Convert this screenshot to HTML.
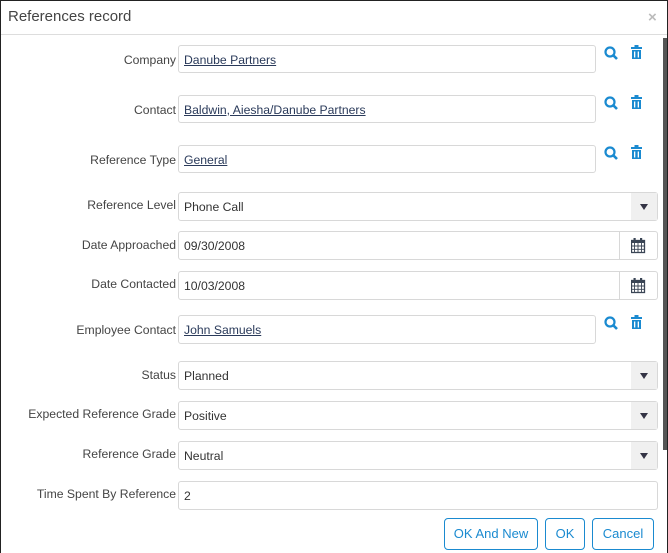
<!DOCTYPE html><html><head><style>
body{margin:0;width:668px;height:550px;overflow:hidden;background:#fff;font-family:"Liberation Sans",sans-serif;font-size:12.2px;color:#333;}
.frame{position:absolute;left:0;top:0;width:666px;height:552px;border:1px solid #222;border-bottom:none;}
.title{position:absolute;left:8px;top:8px;font-size:15px;color:#444;}
.x{position:absolute;left:648px;top:9px;color:#bbb;font-size:15px;font-weight:bold}
.hr{position:absolute;left:1px;right:1px;top:34px;border-top:1px solid #ddd;}
.sb{position:absolute;left:663px;top:38px;width:4px;height:412px;background:#555;}
.lab{position:absolute;right:492px;text-align:right;white-space:nowrap;color:#444}
.in{position:absolute;left:178px;height:27px;border:1px solid #d8d8d8;border-radius:3px;box-sizing:border-box;background:#fff}
.in span{position:absolute;left:5px;top:7px;color:#333}
.in span.u{color:#2a3a5a;text-decoration:underline}
.dd{position:absolute;right:0;top:0;width:26px;height:100%;background:#f0f0f0;}
.dd:after{content:"";position:absolute;left:9px;top:11px;border-left:4px solid transparent;border-right:4px solid transparent;border-top:6px solid #334;}
.cal{position:absolute;right:0;top:0;width:37px;height:100%;border-left:1px solid #d8d8d8}
.btn{position:absolute;top:518px;height:32px;border:1px solid #1a8ad0;border-radius:4px;box-sizing:border-box;color:#1a8ad0;text-align:center;line-height:29px;font-size:13px}
</style></head><body>
<div class="frame"></div>
<div class="title">References record</div><div class="x">×</div>
<div class="hr"></div><div class="sb"></div>
<svg width="0" height="0" style="position:absolute"><defs>
<g id="s"><circle cx="6" cy="6" r="4.5" fill="none" stroke="#1a8ad0" stroke-width="2.2"/><line x1="9.3" y1="9.3" x2="13" y2="13" stroke="#1a8ad0" stroke-width="2.6"/></g>
<g id="t" fill="#1a8ad0"><rect x="0" y="2" width="11" height="2"/><rect x="3.5" y="0" width="4" height="2"/><path d="M1 5h9v9h-9z M3 6.5v6h1.3v-6z M6.7 6.5v6h1.3v-6z" fill-rule="evenodd"/></g>
<g id="c" fill="#3a4555"><rect x="0.5" y="2.5" width="13" height="12" fill="none" stroke="#3a4555" stroke-width="1.3"/><rect x="0" y="2" width="14" height="3"/><rect x="2.5" y="0" width="2.2" height="3"/><rect x="9" y="0" width="2.2" height="3"/><path d="M0 8h14M0 11.3h14M3.5 5v9M7 5v9M10.5 5v9" stroke="#3a4555" stroke-width=".9"/></g>
</defs></svg>

<div class="lab" style="top:53px">Company</div><div class="in" style="top:45px;width:418px;height:28px"><span class="u">Danube Partners</span></div>
<svg style="position:absolute;left:604px;top:46px" width="14" height="14"><use href="#s"/></svg><svg style="position:absolute;left:631px;top:45px" width="12" height="15"><use href="#t"/></svg>

<div class="lab" style="top:103px">Contact</div><div class="in" style="top:95px;width:418px;height:28px"><span class="u">Baldwin, Aiesha/Danube Partners</span></div>
<svg style="position:absolute;left:604px;top:96px" width="14" height="14"><use href="#s"/></svg><svg style="position:absolute;left:631px;top:95px" width="12" height="15"><use href="#t"/></svg>

<div class="lab" style="top:153px">Reference Type</div><div class="in" style="top:145px;width:418px;height:28px"><span class="u">General</span></div>
<svg style="position:absolute;left:604px;top:146px" width="14" height="14"><use href="#s"/></svg><svg style="position:absolute;left:631px;top:145px" width="12" height="15"><use href="#t"/></svg>

<div class="lab" style="top:198px">Reference Level</div><div class="in" style="top:192px;width:480px;height:29px"><span>Phone Call</span><div class="dd"></div></div>
<div class="lab" style="top:238px">Date Approached</div><div class="in" style="top:231px;width:480px;height:29px"><span>09/30/2008</span><div class="cal"><svg style="position:absolute;left:11px;top:6px" width="15" height="16"><use href="#c"/></svg></div></div>
<div class="lab" style="top:277px">Date Contacted</div><div class="in" style="top:271px;width:480px;height:29px"><span>10/03/2008</span><div class="cal"><svg style="position:absolute;left:11px;top:6px" width="15" height="16"><use href="#c"/></svg></div></div>

<div class="lab" style="top:323px">Employee Contact</div><div class="in" style="top:315px;width:418px;height:29px"><span class="u">John Samuels</span></div>
<svg style="position:absolute;left:604px;top:316px" width="14" height="14"><use href="#s"/></svg><svg style="position:absolute;left:631px;top:315px" width="12" height="15"><use href="#t"/></svg>

<div class="lab" style="top:368px">Status</div><div class="in" style="top:361px;width:480px;height:29px"><span>Planned</span><div class="dd"></div></div>
<div class="lab" style="top:407px">Expected Reference Grade</div><div class="in" style="top:401px;width:480px;height:29px"><span>Positive</span><div class="dd"></div></div>
<div class="lab" style="top:447px">Reference Grade</div><div class="in" style="top:441px;width:480px;height:29px"><span>Neutral</span><div class="dd"></div></div>
<div class="lab" style="top:487px">Time Spent By Reference</div><div class="in" style="top:481px;width:480px;height:29px"><span>2</span></div>

<div class="btn" style="left:444px;width:94px">OK And New</div>
<div class="btn" style="left:545px;width:40px">OK</div>
<div class="btn" style="left:592px;width:62px">Cancel</div>
</body></html>
